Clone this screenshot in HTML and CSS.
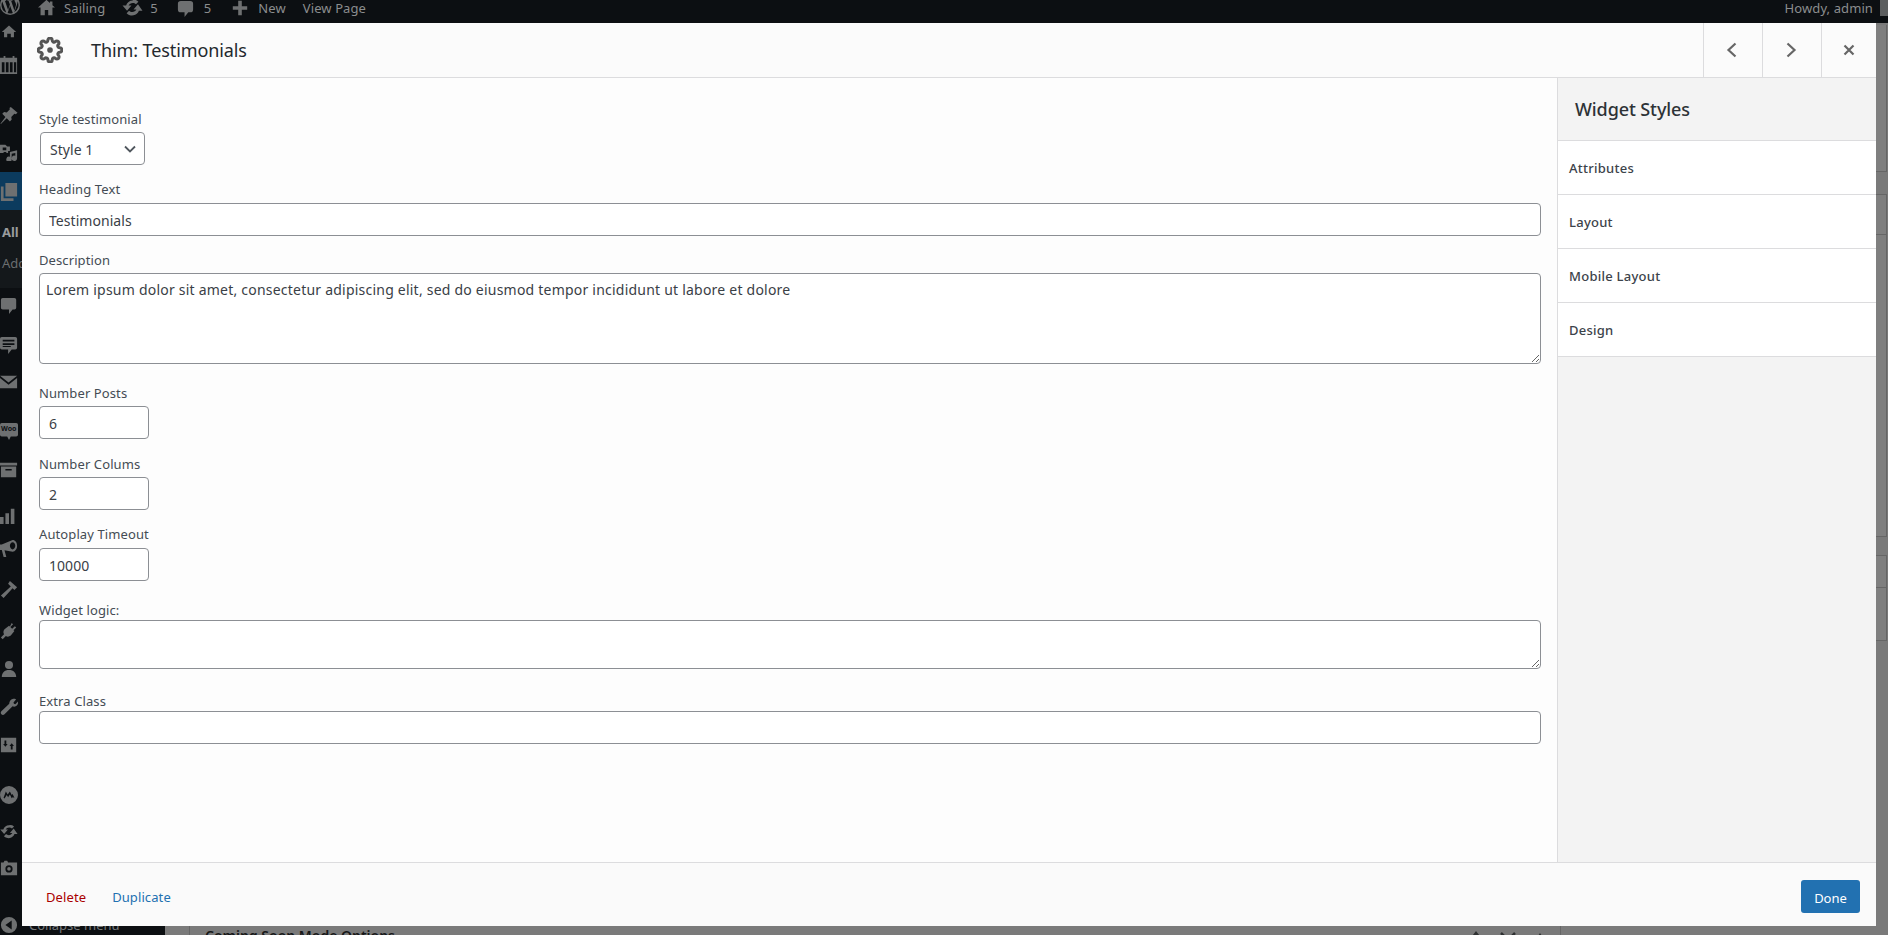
FILE: index.html
```html
<!DOCTYPE html>
<html lang="en">
<head>
<meta charset="utf-8">
<title>Thim: Testimonials</title>
<link rel="stylesheet" href="styles.css">
</head>
<body>
<header class="bar">
  <svg class="bar-wp" viewBox="0 0 20 20"><path d="M10 0a10 10 0 1 0 0 20 10 10 0 0 0 0-20zM1.5 10c0-1.2.3-2.400.7-3.400l4 11A8.500 8.500 0 0 1 1.500 10zm8.500 8.500c-.8 0-1.600-.1-2.400-.4l2.500-7.400 2.600 7.100.1.100c-.9.400-1.800.6-2.800.6zm1.200-12.500c.5 0 1-.1 1-.1.500-.1.400-.7 0-.7 0 0-1.400.1-2.300.1-.8 0-2.200-.1-2.200-.1-.5 0-.5.700 0 .7l.9.100 1.300 3.600-1.800 5.500-3.100-9.100c.5 0 1-.1 1-.1.500-.1.400-.7 0-.7H5.300A8.500 8.500 0 0 1 16 3.700h-.1c-.8 0-1.400.7-1.400 1.500 0 .7.400 1.300.8 2 .3.600.7 1.300.7 2.400 0 .7-.3 1.600-.7 2.800l-.9 3zm3.100 11.300l2.600-7.500c.5-1.200.6-2.200.6-3 0-.3 0-.6-.1-.9a8.500 8.500 0 0 1-3.100 11.400z"/></svg>
  <svg class="bar-home" viewBox="0 0 20 20"><path d="M10 1 0 10h3v9h5v-6h4v6h5v-9h3l-3-2.700V3h-3v1.600z"/></svg>
  <span class="bar-text bar-site">Sailing</span>
  <svg class="bar-sync" viewBox="0 0 20 20"><path d="M10.200 3.300c-3 0-5.500 2-6.300 4.700H.5l4.300 5 4.200-5H6.300c.7-1.400 2.200-2.300 3.900-2.300 1.200 0 2.300.5 3.100 1.300l2.300-2.400a7 7 0 0 0-5.400-2.300zM15.200 7l-4.200 5h2.700c-.7 1.400-2.200 2.300-3.900 2.300-1.200 0-2.300-.5-3.100-1.300l-2.300 2.400a7 7 0 0 0 11.700-2.400h3.400z"/></svg>
  <span class="bar-text bar-count-a">5</span>
  <svg class="bar-comment" viewBox="0 0 20 20"><path d="M5 2h10a3 3 0 0 1 3 3v6a3 3 0 0 1-3 3h-2l-4 5v-5H5a3 3 0 0 1-3-3V5a3 3 0 0 1 3-3z"/></svg>
  <span class="bar-text bar-count-b">5</span>
  <svg class="bar-plus" viewBox="0 0 20 20"><path d="M8 2h4v6h6v4h-6v6H8v-6H2V8h6z"/></svg>
  <span class="bar-text bar-new">New</span>
  <span class="bar-text bar-view">View Page</span>
  <span class="bar-text bar-howdy">Howdy, admin</span>
  <span class="bar-avatar"></span>
</header>

<div class="page">
  <nav class="rail">
    <div class="item h-34"><svg class="ic" viewBox="0 0 20 20"><path d="M10 4 2 11h2.500v6H8v-4h4v4h3.500v-6H18z"/></svg></div>
    <div class="item h-51"><svg class="ic" viewBox="0 0 20 20"><path d="M4 0h2v2h8V0h2v2h3v18H0V2h4zM2 7v11h3V7zm4.500 0v11h3V7zm4.500 0v11h3V7zm4.500 0v11H18V7z" fill-rule="evenodd"/></svg></div>
    <div class="item h-36"><svg class="ic" viewBox="0 0 20 20"><path d="M12 0l7.500 6.500-2 1.500-1.500-.5-3.500 3.500.5 3-2 2-3.500-3.500L1 19l-.5-.5 5.500-7.500L2.500 7.500l2-2 3 .5L11 2.500 10.500 1z"/></svg></div>
    <div class="item h-30"><svg class="ic" viewBox="0 0 20 20"><path d="M0 2h6l2 2h3v5H9v2H7v-1H4v1H0zm3 3v3h4V5zM11 10l8-2v9a3 3 0 1 1-2-2.800V11l-4 1v6a3 3 0 1 1-2-2.800z" fill-rule="evenodd"/></svg></div>
    <div class="item item-active"><svg class="ic" viewBox="0 0 20 20"><path d="M6 0h13v15H6zM1 4h3v13h11v3H1z"/></svg></div>
    <div class="sub">
      <span class="sub-current">All Pages</span>
      <span class="sub-link">Add New</span>
    </div>
    <div class="item item-after-sub h-40"><svg class="ic" viewBox="0 0 20 20"><path d="M3 1h13a2 2 0 0 1 2 2v9a2 2 0 0 1-2 2h-2l-4 5v-5H3a2 2 0 0 1-2-2V3a2 2 0 0 1 2-2z"/></svg></div>
    <div class="item h-36"><svg class="ic" viewBox="0 0 20 20"><path d="M2 0h15a2 2 0 0 1 2 2v10a2 2 0 0 1-2 2h-4l-4 5v-5H2a2 2 0 0 1-2-2V2a2 2 0 0 1 2-2zm1 3v2h13V3zm0 4v2h13V7zm0 4h9V10H3z" fill-rule="evenodd"/></svg></div>
    <div class="item h-50"><svg class="ic" viewBox="0 0 20 20"><path d="M0 3h19L9.500 10.500zM0 5.500 9.500 13 19 5.500V17H0z"/></svg></div>
    <div class="item h-38"><svg class="ic" viewBox="0 0 20 20"><path d="M2 0h16a2 2 0 0 1 2 2v11a2 2 0 0 1-2 2h-6l-2 4-2-4H2a2 2 0 0 1-2-2V2a2 2 0 0 1 2-2z"/></svg><span class="woo-label">Woo</span></div>
    <div class="item h-46"><svg class="ic" viewBox="0 0 20 20"><path d="M0 2h19v3H0zM1 6h17v12H1zm5 3v1.500h7V9z" fill-rule="evenodd"/></svg></div>
    <div class="item h-33"><svg class="ic" viewBox="0 0 20 20"><path d="M0 11h4v8H0zM6 7h4v12H6zM12 2h4v17h-4z"/></svg></div>
    <div class="item h-41"><svg class="ic" viewBox="0 0 20 20"><path d="M14 0c3 0 5 3 5 6.500S17 13 14 13L5 11.500 7 19H4L2 11H0V5h2zm0 2.500c-1.500 0-3 2-3 4s1.500 4 3 4 3-2 3-4-1.500-4-3-4z" fill-rule="evenodd"/></svg></div>
    <div class="item h-42"><svg class="ic" viewBox="0 0 20 20"><path d="M11 0l8 7-3 3-2-2-10 11-3-3L12 6l-3-3z"/></svg></div>
    <div class="item h-37"><svg class="ic" viewBox="0 0 20 20"><path d="M13 0l1.500 1.500-3 3 2 2 3-3L18 5l-3 3 1 1-4 5c-2 1.500-4 1.500-5.500.5L3 18l-2-2 3.500-3.500c-1-1.500-1-3.500.5-5.500l5-4 1 1z"/></svg></div>
    <div class="item h-38"><svg class="ic" viewBox="0 0 20 20"><path d="M10 1a4.500 4.500 0 0 1 0 9 4.500 4.500 0 0 1 0-9zM2 19c0-5 3-8 8-8s8 3 8 8z"/></svg></div>
    <div class="item h-38"><svg class="ic" viewBox="0 0 20 20"><path d="M14 1c2-.5 3.500 0 4 .5L15 5l.5 1.500L17 7l3-3c.5 2-.5 4-2 5-1.500.8-3 .8-4 .3L5 18c-1 1-2.500 1-3.500 0s-.8-2.300 0-3.200l8.800-8.300C10 4 12 1.500 14 1z"/></svg></div>
    <div class="item h-50"><svg class="ic" viewBox="0 0 20 20"><path d="M1 2h17v16H1zm4 3v4H3.500L6 12l2.500-3H7V5zm7 10h2v-4h1.500L13 8l-2.500 3H12z" fill-rule="evenodd"/></svg></div>
    <div class="item h-37"><svg class="ic" viewBox="0 0 20 20"><path d="M10 0a10 10 0 1 0 0 20 10 10 0 0 0 0-20zM4 13l2.500-7 2 3.500L11 6l2 4 1-1 2 4-2-.5-1 1-2-4-2 3-1.500-2.500L5 14z" fill-rule="evenodd"/></svg></div>
    <div class="item h-36"><svg class="ic" viewBox="0 0 20 20"><path d="M10 2.500c-3 0-5.500 2-6.300 4.700H.3l4.300 5 4.200-5H6.300c.7-1.400 2.200-2.300 3.900-2.300 1.200 0 2.300.5 3.100 1.300l2.300-2.400A7 7 0 0 0 10 2.500zm5.200 3.700-4.200 5h2.700c-.7 1.400-2.200 2.300-3.900 2.300-1.200 0-2.300-.5-3.100-1.300l-2.300 2.400a7 7 0 0 0 11.700-2.400h3.400z"/></svg></div>
    <div class="item h-57"><svg class="ic" viewBox="0 0 20 20"><path d="M1 4h3l1-2h3l1 2h10v14H1zm9 3a4 4 0 1 0 0 8 4 4 0 0 0 0-8zm0 2a2 2 0 1 1 0 4 2 2 0 0 1 0-4z" fill-rule="evenodd"/></svg></div>
    <div class="item item-collapse"><svg class="ic" viewBox="0 0 20 20"><path d="M10 1a9 9 0 1 0 0 18 9 9 0 0 0 0-18zm3 4v10L6 10z" fill-rule="evenodd"/></svg><span class="collapse-label">Collapse menu</span></div>
  </nav>

  <main class="content">
    <section class="postbox">
      <h2 class="postbox-title">Coming Soon Mode Options</h2>
      <div class="postbox-handles">
        <svg class="handle" viewBox="0 0 20 20"><path d="M4 14 10 6l6 8" /></svg>
        <svg class="handle" viewBox="0 0 20 20"><path d="M3 6l14 14M17 6 3 20"/></svg>
        <svg class="handle handle-solid" viewBox="0 0 20 20"><path d="M10 6l6 9H4z"/></svg>
      </div>
    </section>
  </main>

  <aside class="side-col">
    <div class="card card-first"></div>
    <div class="card card-second"><div class="card-row-a"></div></div>
    <div class="card card-third"><div class="card-row-b"></div></div>
  </aside>
</div>

<div class="modal" role="dialog" aria-label="Thim: Testimonials">
  <div class="modal-head">
    <svg class="gear" viewBox="0 0 24 24"><circle class="gear-dot" cx="12" cy="12" r="2.600"/><path class="gear-line" d="M19.400 15a1.650 1.650 0 0 0 .33 1.820l.06.06a2 2 0 0 1 0 2.830 2 2 0 0 1-2.830 0l-.06-.06a1.650 1.650 0 0 0-1.820-.33 1.650 1.650 0 0 0-1 1.510V21a2 2 0 0 1-2 2 2 2 0 0 1-2-2v-.09A1.650 1.650 0 0 0 9 19.400a1.650 1.650 0 0 0-1.820.33l-.06.06a2 2 0 0 1-2.830 0 2 2 0 0 1 0-2.830l.06-.06a1.650 1.650 0 0 0 .33-1.820 1.650 1.650 0 0 0-1.510-1H3a2 2 0 0 1-2-2 2 2 0 0 1 2-2h.09A1.650 1.650 0 0 0 4.600 9a1.650 1.650 0 0 0-.33-1.820l-.06-.06a2 2 0 0 1 0-2.830 2 2 0 0 1 2.830 0l.06.06a1.650 1.650 0 0 0 1.820.33H9a1.650 1.650 0 0 0 1-1.510V3a2 2 0 0 1 2-2 2 2 0 0 1 2 2v.09a1.650 1.650 0 0 0 1 1.510 1.650 1.650 0 0 0 1.820-.33l.06-.06a2 2 0 0 1 2.830 0 2 2 0 0 1 0 2.830l-.06.06a1.650 1.650 0 0 0-.33 1.820V9a1.650 1.650 0 0 0 1.510 1H21a2 2 0 0 1 2 2 2 2 0 0 1-2 2h-.09a1.650 1.650 0 0 0-1.510 1z"/></svg>
    <h1 class="modal-title">Thim: Testimonials</h1>
    <button class="head-btn" type="button" aria-label="Previous"><svg class="head-ic head-ic-nav" viewBox="0 0 14 16"><path d="M10.500 1.500 3.500 8l7 6.500"/></svg></button>
    <button class="head-btn" type="button" aria-label="Next"><svg class="head-ic head-ic-nav" viewBox="0 0 14 16"><path d="M3.500 1.500 10.500 8l-7 6.500"/></svg></button>
    <button class="head-btn head-btn-close" type="button" aria-label="Close"><svg class="head-ic" viewBox="0 0 14 16"><path d="M2.500 3.500l9 9M11.500 3.500l-9 9"/></svg></button>
  </div>

  <div class="modal-body">
    <form class="form">
      <div class="field field-1">
        <label class="label">Style testimonial</label>
        <div class="select-wrap">
          <select class="select"><option>Style 1</option><option>Style 2</option></select>
          <svg class="select-arrow" viewBox="0 0 12 8"><path d="M1 1.500 6 6.500l5-5"/></svg>
        </div>
      </div>
      <div class="field field-2">
        <label class="label label-gap5">Heading Text</label>
        <input class="input" type="text" value="Testimonials">
      </div>
      <div class="field field-3">
        <label class="label">Description</label>
        <textarea class="textarea textarea-desc">Lorem ipsum dolor sit amet, consectetur adipiscing elit, sed do eiusmod tempor incididunt ut labore et dolore</textarea>
      </div>
      <div class="field field-4">
        <label class="label">Number Posts</label>
        <input class="input input-short" type="text" value="6">
      </div>
      <div class="field field-5">
        <label class="label">Number Colums</label>
        <input class="input input-short" type="text" value="2">
      </div>
      <div class="field field-6">
        <label class="label label-gap5">Autoplay Timeout</label>
        <input class="input input-short" type="text" value="10000">
      </div>
      <div class="field field-7">
        <label class="label label-gap1">Widget logic:</label>
        <textarea class="textarea textarea-logic"></textarea>
      </div>
      <div class="field field-8">
        <label class="label label-gap1">Extra Class</label>
        <input class="input" type="text">
      </div>
    </form>

    <aside class="styles">
      <h3 class="styles-title">Widget Styles</h3>
      <div class="styles-item">Attributes</div>
      <div class="styles-item">Layout</div>
      <div class="styles-item">Mobile Layout</div>
      <div class="styles-item">Design</div>
    </aside>
  </div>

  <div class="modal-foot">
    <a class="link link-delete">Delete</a>
    <a class="link link-dup">Duplicate</a>
    <button class="done" type="button">Done</button>
  </div>
</div>
</body>
</html>
```

FILE: styles.css
```css
* { box-sizing: border-box; }

html, body {
  margin: 0;
  height: 935px;
  overflow: hidden;
}

body {
  background: #7a7a7a;
  font-family: "Noto Sans", "Open Sans", sans-serif;
  font-size: 13px;
  color: #2c3338;
}

/* admin bar */
.bar {
  position: relative;
  z-index: 1;
  height: 23px;
  background: #0c0f12;
  display: flex;
  align-items: center;
  color: #8b8d8e;
  overflow: hidden;
}

.bar svg { fill: #6e7071; flex: none; }
.bar-text { font-size: 13px; letter-spacing: 0.1px; white-space: nowrap; line-height: 16px; margin-top: -7px; }
.bar-wp { width: 20px; height: 20px; margin: -14px 0 0 0; }
.bar-home { width: 17px; height: 17px; margin: -9px 0 0 18px; }
.bar-site { margin-left: 9px; }
.bar-sync { width: 21px; height: 21px; margin: -9px 0 0 17px; }
.bar-count-a { margin-left: 7px; }
.bar-comment { width: 19px; height: 19px; margin: -7px 0 0 18px; }
.bar-count-b { margin-left: 9px; }
.bar-plus { width: 18px; height: 18px; margin: -8px 0 0 20px; }
.bar-new { margin-left: 9px; }
.bar-view { margin-left: 17px; }
.bar-howdy { margin-left: auto; }
.bar-avatar { width: 8px; height: 16px; margin: -7px 0 0 7px; background: #5d5f60; flex: none; }

/* page behind the dialog */
.page {
  display: flex;
  height: 912px;
  overflow: hidden;
}

.rail {
  width: 165px;
  flex: none;
  margin-top: -2px;
  background: #0c0f12;
  color: #8b8d8e;
}

.item { position: relative; display: flex; align-items: flex-start; }
.ic { width: 18px; height: 18px; margin-top: 1px; fill: #6e7071; flex: none; }

.h-30 { height: 30px; }
.h-33 { height: 33px; }
.h-34 { height: 34px; }
.h-36 { height: 36px; }
.h-37 { height: 37px; }
.h-38 { height: 38px; }
.h-40 { height: 40px; }
.h-41 { height: 41px; }
.h-42 { height: 42px; }
.h-46 { height: 46px; }
.h-50 { height: 50px; }
.h-51 { height: 51px; }
.h-57 { height: 57px; }

.item-active { height: 38px; align-items: center; background: #0c3b5e; }
.item-after-sub { margin-top: 8px; }
.item-collapse { height: 24px; }

.sub {
  height: 78px;
  background: #14181b;
  font-size: 13px;
  padding: 13px 0 0 2px;
  display: flex;
  flex-direction: column;
  gap: 13px;
  line-height: 18px;
  white-space: nowrap;
}

.sub-current { font-weight: 700; color: #9a9c9d; }
.sub-link { color: #6b6e70; }

.woo-label {
  position: absolute;
  left: 1px;
  top: 1px;
  font-size: 7px;
  font-weight: 700;
  line-height: 12px;
  color: #0c0f12;
}

.collapse-label { margin: 1px 0 0 11px; font-size: 13px; line-height: 18px; color: #77797a; }

.content {
  flex: 1;
  min-width: 0;
  padding: 901px 0 0 24px;
}

.postbox {
  height: 40px;
  border-left: 1px solid #666;
  border-right: 1px solid #666;
  display: flex;
  justify-content: space-between;
  padding: 2px 0 0 15px;
}

.postbox-title {
  margin: 0;
  font-size: 14px;
  font-weight: 600;
  line-height: 20px;
  color: #161718;
}

.postbox-handles { display: flex; gap: 12px; margin: 1px 10px 0 0; }
.handle { width: 20px; height: 20px; fill: none; stroke: #2f3132; stroke-width: 2.500; }
.handle-solid { fill: #2f3132; stroke: none; }

.side-col {
  width: 327px;
  flex: none;
  padding: 2px 1px 0 15px;
}

.card { background: #7f7f7f; border-right: 1px solid #666; border-bottom: 1px solid #666; border-top: 1px solid #666; }
.card-first { height: 147px; margin-bottom: 22px; border-top: 0; }
.card-second { height: 343px; margin-bottom: 18px; }
.card-row-a { height: 40px; border-bottom: 1px solid #666; }
.card-third { height: 86px; }
.card-row-b { height: 32px; border-bottom: 1px solid #666; }

/* dialog */
.modal {
  position: fixed;
  left: 22px;
  top: 23px;
  width: 1854px;
  height: 903px;
  z-index: 2;
  background: #fcfcfc;
  display: flex;
  flex-direction: column;
}

.modal-head {
  height: 55px;
  flex: none;
  display: flex;
  align-items: stretch;
  background: #fbfbfb;
  border-bottom: 1px solid #dcdcde;
}

.gear {
  width: 26px;
  height: 26px;
  margin: 14px 0 0 15px;
  flex: none;
}

.gear-dot { fill: #555; }
.gear-line { fill: none; stroke: #555; stroke-width: 2.800; }

.modal-title {
  flex: 1;
  margin: 0 0 0 28px;
  font-size: 18px;
  font-weight: 400;
  line-height: 54px;
  letter-spacing: -0.1px;
  color: #23282d;
}

.head-btn {
  width: 59px;
  border: 0;
  border-left: 1px solid #dcdcde;
  background: transparent;
  padding: 0;
  display: flex;
  align-items: center;
  justify-content: center;
}

.head-btn-close { width: 55px; }

.head-ic { width: 14px; height: 16px; fill: none; stroke: #666; stroke-width: 2.200; }
.head-ic-nav { margin-right: 2px; }

.modal-body {
  flex: 1;
  min-height: 0;
  display: flex;
}

.form {
  flex: 1;
  min-width: 0;
  padding: 32px 16px 0 17px;
  background: #fdfdfd;
}

.label {
  display: block;
  height: 18px;
  margin-bottom: 4px;
  font-size: 13px;
  line-height: 18px;
  letter-spacing: 0.1px;
  color: #444c54;
}

.label-gap5 { margin-bottom: 5px; }
.label-gap1 { margin-bottom: 1px; }

.field-2 { margin-top: 15px; }
.field-3 { margin-top: 15px; }
.field-4 { margin-top: 20px; }
.field-5 { margin-top: 16px; }
.field-6 { margin-top: 15px; }
.field-7 { margin-top: 20px; }
.field-8 { margin-top: 23px; }

.input,
.select,
.textarea {
  font-family: inherit;
  font-size: 14px;
  letter-spacing: 0.05px;
  color: #3a4046;
  background: #fff;
  border: 1px solid #8c8f94;
  border-radius: 4px;
  display: block;
  outline: 0;
}

.input {
  width: 100%;
  height: 33px;
  padding: 2px 9px 0;
}

.input-short { width: 110px; }

.select-wrap {
  position: relative;
  width: 105px;
  height: 33px;
  margin-left: 1px;
}

.select {
  width: 100%;
  height: 100%;
  padding: 2px 24px 0 9px;
  appearance: none;
}

.select-arrow {
  position: absolute;
  right: 9px;
  top: 13px;
  width: 12px;
  height: 8px;
  fill: none;
  stroke: #50575e;
  stroke-width: 1.800;
  pointer-events: none;
}

.textarea {
  width: 100%;
  padding: 6px 6px;
  line-height: 20px;
  letter-spacing: 0.22px;
  overflow: hidden;
}

.textarea-desc { height: 91px; }
.textarea-logic { height: 49px; }

.styles {
  width: 319px;
  flex: none;
  background: #f3f3f3;
  border-left: 1px solid #dcdcde;
}

.styles-title {
  height: 63px;
  margin: 0;
  padding-left: 17px;
  font-size: 18px;
  font-weight: 500;
  line-height: 63px;
  letter-spacing: -0.1px;
  color: #2d3236;
  border-bottom: 1px solid #dcdcde;
}

.styles-item {
  height: 54px;
  padding-left: 11px;
  background: #fff;
  border-bottom: 1px solid #dcdcde;
  font-size: 13px;
  font-weight: 500;
  line-height: 55px;
  letter-spacing: 0.25px;
  color: #3c434a;
}

.modal-foot {
  height: 64px;
  flex: none;
  display: flex;
  align-items: flex-start;
  padding: 17px 16px 0 24px;
  background: #fafafa;
  border-top: 1px solid #dcdcde;
}

.link { font-size: 13px; line-height: 35px; letter-spacing: 0.1px; }
.link-delete { color: #a00; }
.link-dup { margin-left: 26px; color: #2271b1; }

.done {
  margin-left: auto;
  width: 59px;
  height: 33px;
  border: 0;
  border-radius: 3px;
  background: #2271b1;
  color: #fff;
  font-family: inherit;
  font-size: 13px;
  padding: 2px 0 0;
}
```
